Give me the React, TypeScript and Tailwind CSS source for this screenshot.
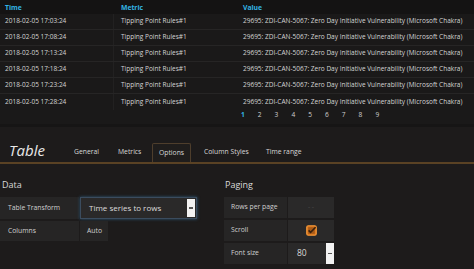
import React from "react";

const rows = ["17:03:24", "17:08:24", "17:13:24", "17:18:24", "17:23:24", "17:28:24"];

export default function App() {
  return (
    <div
      className="w-[474px] h-[269px] overflow-hidden bg-[#1d1b1b] text-[#d8d9da] flex flex-col"
      style={{ fontFamily: '"Open Sans", "Noto Sans", sans-serif' }}
    >
      {/* table panel */}
      <div className="h-[124px] bg-[#1a1919] flex flex-col shrink-0 overflow-hidden">
        <div className="h-[14px] bg-[#141313] flex items-end text-[6.8px] font-bold text-[#33b5e5] leading-none">
          <div className="w-[116px] shrink-0 pl-[5px] pb-[2px]">Time</div>
          <div className="w-[122px] shrink-0 pl-[5px] pb-[2px]">Metric</div>
          <div className="flex-1 pl-[5px] pb-[2px]">Value</div>
        </div>
        {rows.map((t, i) => (
          <div
            key={i}
            className={`h-[16px] shrink-0 flex items-center text-[6.5px] leading-none text-[#d4d4d4] ${i < 5 ? "border-b border-[#262525]" : ""}`}
          >
            <div className="w-[114px] shrink-0 pl-[5px] h-full flex items-center border-r border-[#222121]">2018-02-05 {t}</div>
            <div className="w-[124px] shrink-0 pl-[7px] h-full flex items-center">Tipping Point Rules#1</div>
            <div className="flex-1 pl-[5px] h-full flex items-center whitespace-nowrap">
              29695: ZDI-CAN-5067: Zero Day Initiative Vulnerability (Microsoft Chakra)
            </div>
          </div>
        ))}
        <div className="flex pl-[241px] text-[6.6px] leading-none mt-[2px] text-[#cfcfcf]">
          {[1, 2, 3, 4, 5, 6, 7, 8, 9].map((n) => (
            <span key={n} className={`w-[16.8px] shrink-0 ${n === 1 ? "text-[#33b5e5] font-bold" : ""}`}>
              {n}
            </span>
          ))}
        </div>
      </div>
      <div className="h-[3px] bg-[#161515] shrink-0" />

      {/* editor header */}
      <div className="flex items-end h-[37px] border-b-[2px] border-[#5a4224] shrink-0">
        <div className="pl-[9px] pb-[4px] w-[74px] shrink-0 text-[15px] italic text-[#e8e8e8] leading-none">
          Table
        </div>
        <div className="flex items-end text-[6.8px] text-[#d8d8d8] leading-none whitespace-nowrap">
          <div className="w-[44px] shrink-0 pb-[6px]">General</div>
          <div className="w-[34px] shrink-0 pb-[6px]">Metrics</div>
          <div className="w-[39px] shrink-0 h-[19px] bg-[#1f1d1c] border border-b-0 border-[#4e3e2c] rounded-t-[2px] flex items-end justify-center pb-[5px]">
            Options
          </div>
          <div className="w-[75px] shrink-0 pl-[13px] pb-[6px]">Column Styles</div>
          <div className="pb-[6px]">Time range</div>
        </div>
      </div>

      <div className="flex pt-[16px]">
        {/* data */}
        <div className="w-[224px] shrink-0 flex flex-col">
          <div className="pl-[2px] text-[9px] leading-none mb-[8px] text-[#d8d9da]">Data</div>
          <div className="flex flex-col gap-[2px] text-[6.8px] leading-none">
            <div className="flex h-[22px]">
              <div className="w-[79px] shrink-0 bg-[#262525] pl-[8px] flex items-center text-[#d0d0d0]">Table Transform</div>
              <div className="w-[117px] shrink-0 ml-[1px] bg-[#2a2929] border border-[#3b4c5e] shadow-[0_0_3px_#2d5a7a] flex items-center justify-between pl-[8px] pr-[1px]">
                <span className="text-[8px] text-[#dcdcdc]">Time series to rows</span>
                <div className="w-[8px] h-[18px] bg-[#f2f2f2] flex items-center justify-center">
                  <div className="w-[4px] h-[1.5px] bg-[#555]" />
                </div>
              </div>
            </div>
            <div className="flex h-[20px]">
              <div className="w-[79px] shrink-0 bg-[#262525] pl-[8px] flex items-center text-[#d0d0d0]">Columns</div>
              <div className="w-[28px] shrink-0 ml-[1px] bg-[#262525] pl-[7px] flex items-center text-[#d0d0d0]">Auto</div>
            </div>
          </div>
        </div>

        {/* paging */}
        <div className="flex flex-col">
          <div className="pl-[1px] text-[9px] leading-none mb-[8px] text-[#d8d9da]">Paging</div>
          <div className="flex flex-col gap-[2px] text-[6.8px] leading-none">
            <div className="flex h-[21px]">
              <div className="w-[63px] shrink-0 bg-[#262525] pl-[7px] flex items-center text-[#d0d0d0]">Rows per page</div>
              <div className="w-[46px] shrink-0 ml-[1px] bg-[#2a2929] flex items-center justify-center text-[#4a4a4a]">- -</div>
            </div>
            <div className="flex h-[21px]">
              <div className="w-[63px] shrink-0 bg-[#262525] pl-[7px] flex items-center text-[#d0d0d0]">Scroll</div>
              <div className="w-[46px] shrink-0 ml-[1px] bg-[#2a2929] flex items-center justify-center">
                <svg width="11" height="11" viewBox="0 0 11 11">
                  <rect x="0.75" y="0.75" width="9.5" height="9.5" rx="1.5" fill="#d9731c" stroke="#f39a3a" strokeWidth="1.2" />
                  <rect x="2.2" y="2.2" width="6.6" height="6.6" fill="#4a2a10" opacity="0.35" />
                  <path d="M2.6 5.4 L4.6 7.4 L9.6 2.2" fill="none" stroke="#3a200c" strokeWidth="1.6" />
                </svg>
              </div>
            </div>
            <div className="flex h-[21px]">
              <div className="w-[63px] shrink-0 bg-[#262525] pl-[7px] flex items-center text-[#d0d0d0]">Font size</div>
              <div className="w-[46px] shrink-0 ml-[1px] bg-[#2a2929] flex items-center justify-between pl-[9px] text-[8.5px] text-[#d8d8d8]">
                <span>80</span>
                <div className="w-[8px] h-[21px] bg-[#f2f2f2] flex items-center justify-center">
                  <div className="w-[4px] h-[1.5px] bg-[#555]" />
                </div>
              </div>
            </div>
          </div>
        </div>
      </div>
    </div>
  );
}
